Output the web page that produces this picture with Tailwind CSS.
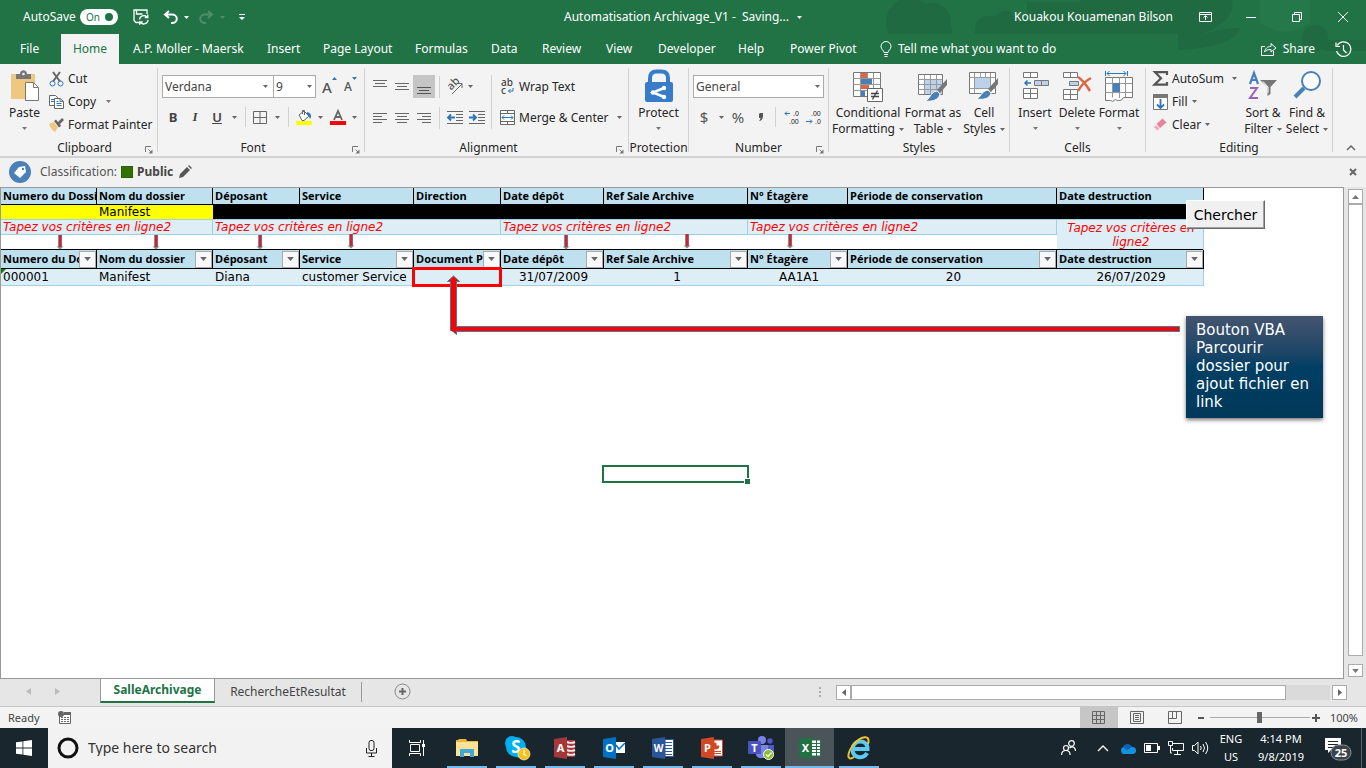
<!DOCTYPE html>
<html lang="en">
<head>
    <meta charset="UTF-8">
    <meta name="viewport" content="width=device-width, initial-scale=1.0">
    <title>Automatisation Archivage_V1</title>
    <script src="https://cdn.jsdelivr.net/npm/@tailwindcss/browser@4"></script>
</head>
<body class="flex h-screen flex-col overflow-hidden bg-[#f3f3f3] font-['Noto_Sans',sans-serif] text-[12px] leading-4 text-[#262626] select-none">

    <!-- shared glyphs -->
    <svg class="hidden">
        <symbol id="caret" viewBox="0 0 5 3"><path d="M0 0h5L2.500 3z" fill="currentColor"/></symbol>
        <symbol id="launcher" viewBox="0 0 8 8"><path d="M.5 6V.5H6M3.500 3.500l3 3" fill="none" stroke="#777"/><path d="M7.500 3.500v4h-4z" fill="#777"/></symbol>
        <symbol id="redarrow" viewBox="0 0 8 15"><path d="M2 0v11.500H.5L4 14.500l3.500-3H6V0z" fill="#7394a5"/><path d="M3 0h2.500v12H3z" fill="#d9202a"/></symbol>
    </svg>

    <header class="relative shrink-0 bg-[#217346] text-white">
        <svg class="absolute top-0 right-0" width="506" height="64" viewBox="0 0 506 64">
            <g fill="#1f6a41">
                <circle cx="50" cy="22" r="24"/><circle cx="72" cy="22" r="19"/><path d="M28 28h64v6H28z"/>
                <path d="M115 34c-2-14 8-20 20-18 6-6 14-8 20 0h12V2h62v32zM220 0h152c4 14-12 28-30 34H225z"/>
                <circle cx="455" cy="38" r="13"/><path d="M450 40h56v12h-40z"/>
            </g>
            <path d="M28 34h289v17h189v13H0V34z" fill="#217346"/>
            <path d="M318 34h24c12-2 22-6 38-6-4 14-28 20-62 22z" fill="#1f6a41"/>
            <path d="M400 0h50v22c-16 14-34 12-50 0z" fill="#257849"/>
        </svg>

        <div class="relative grid h-[34px] grid-cols-[1fr_auto_1fr] items-center">
            <div class="flex items-center pl-[23px]">
                <span>AutoSave</span>
                <button type="button" aria-label="AutoSave on" class="ml-1 flex h-4 w-[38px] items-center justify-between rounded-full bg-white px-1 pl-1.5 text-[10px] text-[#217346]">
                    <span>On</span><span class="mr-px size-2 rounded-full bg-[#217346]"></span>
                </button>
                <button type="button" aria-label="Save" class="ml-[15px]">
                    <svg width="16" height="16" viewBox="0 0 16 16" fill="none" stroke="#fff" stroke-width="1.300"><path d="M6 13.500H3l-2-2V1h13v4M3.500 1v4h6"/><path d="M6.500 10.500a4.300 4.300 0 0 1 7.500-2.500M14.800 5.500V8.500h-3M15 11a4.300 4.300 0 0 1-7.500 2.500M6.700 15.800V13h3"/></svg>
                </button>
                <button type="button" aria-label="Undo" class="ml-3.5 flex items-center gap-1.5">
                    <svg width="15" height="15" viewBox="0 0 15 15" fill="none" stroke="#fff" stroke-width="2"><path d="M6 1L2 4.500 6 8M2 4.500h7a4.500 4 0 0 1 0 8.500H8"/></svg>
                    <svg width="5" height="3"><use href="#caret"/></svg>
                </button>
                <button type="button" aria-label="Redo" class="ml-2.5 flex items-center gap-1.5 text-[#4f8f6c]">
                    <svg width="15" height="15" viewBox="0 0 15 15" fill="none" stroke="currentColor" stroke-width="2"><path d="M9 1l4 3.500L9 8M13 4.500H6A4.500 4 0 0 0 6 13h1"/></svg>
                    <svg width="5" height="3"><use href="#caret"/></svg>
                </button>
                <button type="button" aria-label="Customize Quick Access Toolbar" class="ml-3.5"><svg width="6" height="6" viewBox="0 0 6 6"><path d="M0 0h6v1H0zM0 3h6L3 6z" fill="#fff"/></svg></button>
            </div>
            <h1 class="flex items-center gap-2">Automatisation Archivage_V1 - &nbsp;Saving... <svg width="5" height="3"><use href="#caret"/></svg></h1>
            <div class="flex items-center justify-end pr-[18px]">
                <span class="mr-[26px]">Kouakou Kouamenan Bilson</span>
                <button type="button" aria-label="Ribbon display options" class="mr-[34px]"><svg width="13" height="10" viewBox="0 0 13 10" fill="none" stroke="#fff"><path d="M.5.500h12v9H.500zM.500 2.500h12M6.500 8V4M4.500 5.500l2-2 2 2"/></svg></button>
                <button type="button" aria-label="Minimize" class="mr-9"><svg width="10" height="10"><path d="M0 5.500h10" stroke="#fff"/></svg></button>
                <button type="button" aria-label="Restore" class="mr-9"><svg width="10" height="10" viewBox="0 0 10 10" fill="none" stroke="#fff"><path d="M.5 2.500h7v7h-7zM2.500 2.500v-2h7v7h-2"/></svg></button>
                <button type="button" aria-label="Close"><svg width="10" height="10"><path d="M0 0l10 10M10 0L0 10" stroke="#fff"/></svg></button>
            </div>
        </div>

        <nav class="relative flex h-[30px] items-center">
            <a href="#" class="w-[61px] pl-5">File</a>
            <a href="#" class="flex h-full w-[58px] items-center justify-center bg-[#f3f3f3] text-[#217346]">Home</a>
            <a href="#" class="w-[134px] pl-3.5">A.P. Moller - Maersk</a>
            <a href="#" class="w-[56px] pl-3.5">Insert</a>
            <a href="#" class="w-[92px] pl-3.5">Page Layout</a>
            <a href="#" class="w-[76px] pl-3.5">Formulas</a>
            <a href="#" class="w-[51px] pl-3.5">Data</a>
            <a href="#" class="w-[64px] pl-3.5">Review</a>
            <a href="#" class="w-[52px] pl-3.5">View</a>
            <a href="#" class="w-[80px] pl-3.5">Developer</a>
            <a href="#" class="w-[52px] pl-3.5">Help</a>
            <a href="#" class="w-[104px] pl-3.5">Power Pivot</a>
            <a href="#" class="flex items-center gap-1.5">
                <svg width="12" height="16" viewBox="0 0 12 16" fill="none" stroke="#fff"><path d="M4 11.500c0-2-3-3-3-6a5 5 0 0 1 10 0c0 3-3 4-3 6zM4 13.500h4M4.500 15.500h3"/></svg>
                Tell me what you want to do
            </a>
            <a href="#" class="ml-auto flex items-center gap-1.5">
                <svg width="16" height="14" viewBox="0 0 16 14" fill="none" stroke="#fff"><path d="M4 4.500H.500v9h12V9M3.500 10c1-4 3-5.500 6.500-5.500V1.500L15 6l-5 4V7.500c-3 0-5 .500-6.500 2.500z"/></svg>
                Share
            </a>
            <button type="button" aria-label="Version history" class="mr-3.5 ml-5"><svg width="17" height="17" viewBox="0 0 17 17" fill="none" stroke="#fff" stroke-width="1.200"><path d="M2.200 4.500A7.300 7.300 0 1 1 1.500 10M1 1.500v4h4M8.500 4v5l3 3"/></svg></button>
        </nav>
    </header>

    <!-- ribbon -->
    <section class="flex h-[94px] shrink-0 items-start border-b-2 border-[#d2d2d2] bg-[#f3f3f3] pt-1 whitespace-nowrap text-[#262626] [&_svg]:overflow-visible">
        <div class="flex h-[84px] w-[158px] flex-col border-r border-[#d2d2d2]">
            <div class="flex h-[70px]">
                <button type="button" class="flex w-[49px] flex-col items-center pt-0.5">
                    <svg class="mb-[3px]" width="30" height="32" viewBox="0 0 30 32"><path d="M1 4h24v25H1z" fill="#eec87f"/><path d="M6 9V4h4c0-5 7-5 7 0h4v5z" fill="#777"/><circle cx="13.500" cy="4" r="1.300" fill="#f3f3f3"/><path d="M15.500 12.500h8l5 5v13h-13z" fill="#fff" stroke="#777"/><path d="M23.500 12.500v5h5" fill="none" stroke="#777"/></svg>
                    Paste
                    <svg class="mt-1.5" width="5" height="3" color="#777"><use href="#caret"/></svg>
                </button>
                <div class="-mt-px flex flex-col">
                    <button type="button" class="flex h-[23px] items-center gap-1"><svg width="15" height="16" viewBox="0 0 15 16" fill="none"><path d="M4 1l7 9.500M11 1L4 10.500" stroke="#666" stroke-width="2"/><circle cx="3.500" cy="12.500" r="2.500" stroke="#2e75b6"/><circle cx="11.500" cy="12.500" r="2.500" stroke="#2e75b6"/></svg>Cut</button>
                    <button type="button" class="flex h-[23px] items-center gap-1"><svg width="15" height="14" viewBox="0 0 15 14" fill="#fff" stroke="#666"><path d="M.5.500h6l3 3v7h-9z"/><path d="M5.500 3.500h6l3 3v7h-9z"/><path d="M11 3.500v3h3.500" fill="none"/><path d="M2 4.500h3M2 6.500h3M7.500 8.500h5M7.500 10.500h5M7.500 6.500h2" stroke="#2e75b6"/></svg>Copy<svg class="ml-1.5" width="5" height="3" color="#777"><use href="#caret"/></svg></button>
                    <button type="button" class="flex h-[23px] items-center gap-1"><svg width="15" height="14" viewBox="0 0 15 14"><path d="M0 6l4.500-2 4.500 5-3 5c-2-1-4-3-6-8z" fill="#eec87f"/><path d="M5 3l2-1.500L9 4l4-4 2 2-4 4 1 2-2 1.500z" fill="#666"/></svg>Format Painter</button>
                </div>
            </div>
            <div class="grid h-3.5 grid-cols-[1fr_auto_1fr] leading-5"><span></span><span class="mr-0.5 ml-3.5">Clipboard</span><button type="button" aria-label="Clipboard settings" class="mt-1 mr-1 justify-self-end"><svg width="8" height="8"><use href="#launcher"/></svg></button></div>
        </div>

        <div class="flex h-[84px] w-[207px] flex-col border-r border-[#d2d2d2]">
            <div class="flex h-[70px] flex-col gap-2 pt-[7px] pl-1">
                <div class="flex h-[23px] items-center">
                    <div class="relative"><select aria-label="Font" class="h-[23px] w-[112px] appearance-none border border-[#ababab] bg-white px-0.5 text-[#444]"><option>Verdana</option></select><svg class="pointer-events-none absolute top-2.5 right-1.5" width="5" height="3" color="#666"><use href="#caret"/></svg></div>
                    <div class="relative -ml-px"><select aria-label="Font size" class="h-[23px] w-[43px] appearance-none border border-[#ababab] bg-white px-0.5 text-[#444]"><option>9</option></select><svg class="pointer-events-none absolute top-2.5 right-1" width="5" height="3" color="#666"><use href="#caret"/></svg></div>
                    <button type="button" aria-label="Increase font size" class="ml-1.5 flex w-[22px] items-start text-[15px] leading-5 font-medium text-[#555]">A<svg width="5" height="3" viewBox="0 0 5 3"><path d="M0 3h5L2.500 0z" fill="#2e75b6"/></svg></button>
                    <button type="button" aria-label="Decrease font size" class="flex items-start text-[12px] leading-5 font-medium text-[#555]">A<svg width="5" height="3" color="#2e75b6"><use href="#caret"/></svg></button>
                </div>
                <div class="flex h-[22px] items-center text-[13px] text-[#444]">
                    <button type="button" class="w-[22px] font-bold">B</button>
                    <button type="button" class="w-[22px] font-['Liberation_Serif',serif] font-bold italic">I</button>
                    <button type="button" class="w-[22px] font-semibold underline">U</button>
                    <button type="button" aria-label="Underline style" class="w-3"><svg class="mx-auto" width="5" height="3" color="#666"><use href="#caret"/></svg></button>
                    <span class="mx-[5px] h-5 w-px bg-[#d2d2d2]"></span>
                    <button type="button" aria-label="Borders" class="flex items-center gap-2 pl-0.5"><svg width="14" height="13" viewBox="0 0 14 13"><path d="M.5.500h13v12H.500zM7 0v13M0 6.500h14" fill="none" stroke="#666"/></svg><svg width="5" height="3" color="#666"><use href="#caret"/></svg></button>
                    <span class="mr-[7px] ml-2 h-5 w-px bg-[#d2d2d2]"></span>
                    <button type="button" aria-label="Fill color" class="flex items-center gap-1.5"><svg width="16" height="16" viewBox="0 0 16 16"><path d="M3 6l5-4 5 5-5 4.500H6z" fill="#fff" stroke="#666"/><path d="M6.500 5V1.500h2V6" fill="none" stroke="#666"/><path d="M11 3c4 1 5 4 3 7-1-2-1-4-3-4z" fill="#2e75b6"/><path d="M0 12h16v4H0z" fill="#ff0"/></svg><svg width="5" height="3" color="#666"><use href="#caret"/></svg></button>
                    <button type="button" aria-label="Font color" class="ml-[7px] flex items-center gap-1.5"><svg width="16" height="16" viewBox="0 0 16 16"><path d="M4 11L8 2l4 9M5.500 8h5" fill="none" stroke="#666" stroke-width="1.800"/><path d="M0 12h16v4H0z" fill="red"/></svg><svg width="5" height="3" color="#666"><use href="#caret"/></svg></button>
                </div>
            </div>
            <div class="grid h-3.5 grid-cols-[1fr_auto_1fr] leading-5"><span></span><span class="mr-4">Font</span><button type="button" aria-label="Font settings" class="mt-1 mr-1 justify-self-end"><svg width="8" height="8"><use href="#launcher"/></svg></button></div>
        </div>

        <div class="flex h-[84px] w-[264px] flex-col border-r border-[#d2d2d2]">
            <div class="flex h-[70px] pt-[7px]">
                <div class="flex flex-col gap-2 pl-1">
                    <div class="flex h-[23px] items-center">
                        <button type="button" aria-label="Top align" class="flex h-full w-[22px] items-center justify-center"><svg class="mb-1" width="14" height="9"><path d="M0 .5h14M2 3.500h10M0 6.500h14" stroke="#666"/></svg></button>
                        <button type="button" aria-label="Middle align" class="flex h-full w-[22px] items-center justify-center"><svg width="14" height="7"><path d="M0 .5h14M2 3.500h10M0 6.500h14" stroke="#666"/></svg></button>
                        <button type="button" aria-label="Bottom align" class="flex h-full w-[22px] items-end justify-center bg-[#c5c5c5] pb-[3px]"><svg width="14" height="8"><path d="M0 .5h14M2 3.500h10M0 6.500h14" stroke="#555"/></svg></button>
                        <span class="mx-1 h-[22px] w-px bg-[#d2d2d2]"></span>
                        <button type="button" aria-label="Orientation" class="flex items-center gap-1 pl-[3px]"><svg width="17" height="17" viewBox="0 0 17 17"><text x="0" y="11" transform="rotate(-45 4 7)" font-size="11" font-weight="500" fill="#555">ab</text><path d="M5 16L15 6M15 10V5.500h-4.500" fill="none" stroke="#666"/></svg><svg width="5" height="3" color="#666"><use href="#caret"/></svg></button>
                    </div>
                    <div class="flex h-[23px] items-center">
                        <button type="button" aria-label="Align left" class="flex w-[22px] justify-center"><svg width="14" height="10"><path d="M0 .5h14M0 3.500h9M0 6.500h14M0 9.500h9" stroke="#666"/></svg></button>
                        <button type="button" aria-label="Center" class="flex w-[22px] justify-center"><svg width="14" height="10"><path d="M0 .5h14M2 3.500h10M0 6.500h14M2 9.500h10" stroke="#666"/></svg></button>
                        <button type="button" aria-label="Align right" class="flex w-[22px] justify-center"><svg width="14" height="10"><path d="M0 .5h14M5 3.500h9M0 6.500h14M5 9.500h9" stroke="#666"/></svg></button>
                        <span class="mx-1 h-[22px] w-px bg-[#d2d2d2]"></span>
                        <button type="button" aria-label="Decrease indent" class="pl-[3px]"><svg width="16" height="13" viewBox="0 0 16 13"><path d="M0 .5h16M9 3.500h7M9 6.500h7M9 9.500h7M0 12.500h16" stroke="#666"/><path d="M8 6.500H1M4 3.500l-3 3 3 3" stroke="#2e75b6" stroke-width="1.800" fill="none"/></svg></button>
                        <button type="button" aria-label="Increase indent" class="pl-1.5"><svg width="16" height="13" viewBox="0 0 16 13"><path d="M0 .5h16M9 3.500h7M9 6.500h7M9 9.500h7M0 12.500h16" stroke="#666"/><path d="M0 6.500h7M4 3.500l3 3-3 3" stroke="#2e75b6" stroke-width="1.800" fill="none"/></svg></button>
                    </div>
                </div>
                <span class="ml-1.5 h-[54px] w-px bg-[#d2d2d2]"></span>
                <div class="flex flex-col gap-2 pl-2">
                    <button type="button" class="flex h-[23px] items-center gap-1"><svg width="15" height="16" viewBox="0 0 15 16" font-size="10" font-weight="500" fill="#444"><text x="1" y="7">ab</text><text x="1" y="15">c</text><path d="M13 9v3H8.500M10.500 10l-2 2 2 2" fill="none" stroke="#2e75b6"/></svg>Wrap Text</button>
                    <button type="button" class="flex h-[23px] items-center gap-1"><svg width="15" height="15" viewBox="0 0 15 15" fill="#fff" stroke="#666"><path d="M.5.500h14v14H.500zM.500 3.500h14M.500 11.500h14M7.500.500v3M7.500 11.500v3"/><path d="M2 7.500h11M4 5.500l-2 2 2 2M11 5.500l2 2-2 2" stroke="#2e75b6" fill="none"/></svg>Merge &amp; Center<svg class="ml-1" width="5" height="3" color="#666"><use href="#caret"/></svg></button>
                </div>
            </div>
            <div class="grid h-3.5 grid-cols-[1fr_auto_1fr] leading-5"><span></span><span class="mr-4">Alignment</span><button type="button" aria-label="Alignment settings" class="mt-1 mr-1 justify-self-end"><svg width="8" height="8"><use href="#launcher"/></svg></button></div>
        </div>

        <div class="flex h-[84px] w-[60px] flex-col items-center border-r border-[#d2d2d2]">
            <button type="button" class="flex h-[70px] flex-col items-center pt-0.5">
                <svg class="mb-[3px]" width="28" height="32" viewBox="0 0 28 32"><path d="M5 14V8q0-6.500 6.500-6.500h5Q23 1.500 23 8v6" fill="none" stroke="#377cc8" stroke-width="4"/><rect y="12" width="28" height="20" rx="2" fill="#377cc8"/><path d="M19 18L8 22.500 19 27" fill="none" stroke="#fff" stroke-width="2.500"/><circle cx="19" cy="18" r="2.200" fill="#fff"/><circle cx="19" cy="27" r="2.200" fill="#fff"/><circle cx="8" cy="22.500" r="2.200" fill="#fff"/></svg>
                Protect
                <svg class="mt-1.5" width="5" height="3" color="#777"><use href="#caret"/></svg>
            </button>
            <div class="h-3.5 leading-5">Protection</div>
        </div>

        <div class="flex h-[84px] w-[140px] flex-col border-r border-[#d2d2d2]">
            <div class="flex h-[70px] flex-col gap-2 px-1 pt-[7px]">
                <div class="relative"><select aria-label="Number format" class="block h-[23px] w-full appearance-none border border-[#ababab] bg-white px-0.5 text-[#444]"><option>General</option></select><svg class="pointer-events-none absolute top-2.5 right-1" width="5" height="3" color="#666"><use href="#caret"/></svg></div>
                <div class="flex h-[22px] items-center text-[15px] text-[#555]">
                    <button type="button" class="w-[22px]">$</button>
                    <button type="button" aria-label="Accounting formats" class="w-3"><svg class="mx-auto" width="5" height="3" color="#666"><use href="#caret"/></svg></button>
                    <button type="button" class="w-[22px]">%</button>
                    <button type="button" aria-label="Comma style" class="flex w-[22px] justify-center"><svg width="5" height="8" viewBox="0 0 5 8"><path d="M2 0h3v3c0 3-2 5-4 5 1-1 1.500-2 1.500-3H1V1z" fill="#555"/></svg></button>
                    <span class="mx-1 h-5 w-px bg-[#d2d2d2]"></span>
                    <button type="button" aria-label="Increase decimal" class="w-[22px] font-['Liberation_Sans',sans-serif]"><svg class="mx-auto" width="15" height="15" viewBox="0 0 15 15" font-size="7" fill="#222"><text x="9" y="6">.0</text><text x="5" y="14">.00</text><path d="M6 3.500H1M3 1.500l-2 2 2 2" fill="none" stroke="#2e75b6"/></svg></button>
                    <button type="button" aria-label="Decrease decimal" class="w-[22px] font-['Liberation_Sans',sans-serif]"><svg class="mx-auto" width="15" height="15" viewBox="0 0 15 15" font-size="7" fill="#222"><text x="5" y="6">.00</text><text x="9" y="14">.0</text><path d="M0 11.500h6M4 9.500l2 2-2 2" fill="none" stroke="#2e75b6"/></svg></button>
                </div>
            </div>
            <div class="grid h-3.5 grid-cols-[1fr_auto_1fr] leading-5"><span></span><span>Number</span><button type="button" aria-label="Number settings" class="mt-1 mr-1 justify-self-end"><svg width="8" height="8"><use href="#launcher"/></svg></button></div>
        </div>

        <div class="flex h-[84px] w-[181px] flex-col border-r border-[#d2d2d2]">
            <div class="flex h-[70px]">
                <button type="button" class="flex w-[78px] flex-col items-center pt-0.5">
                    <svg class="mb-[3px]" width="30" height="32" viewBox="0 0 30 32"><path d="M.5 2.500h27v24H.500z" fill="#fff" stroke="#777"/><path d="M8 3h6v5H8zM8 14h8v5H8z" fill="#dd6645"/><path d="M8 8h11v6H8zM8 20h4v6H8z" fill="#4a80b8"/><path d="M.5 8.500h27M.500 14.500h27M.500 20.500h27M7.500 3v23M14.500 3v5M20.500 3v23" stroke="#999"/><path d="M14.500 18.500h15v13h-15z" fill="#fff" stroke="#666"/><path d="M18 23.500h8M18 26.500h8M24.500 20.500l-5 9" stroke="#444" stroke-width="1.300"/></svg>
                    Conditional<span class="flex items-center gap-1">Formatting<svg width="5" height="3" color="#666"><use href="#caret"/></svg></span>
                </button>
                <button type="button" class="flex w-[52px] flex-col items-center pt-0.5">
                    <svg class="mb-[3px]" width="30" height="32" viewBox="0 0 30 32"><path d="M.5 4.500h24v20H.500z" fill="#fff" stroke="#777"/><path d="M7 10h17v14H7z" fill="#bcd2ea"/><path d="M.5 9.500h24M.500 14.500h24M.500 19.500h24M6.500 5v19M12.500 5v19M18.500 5v19" stroke="#999"/><path d="M29 9v6l-7 8-3-3z" fill="#777"/><path d="M19 21l3 3c-1 6-8 8-15 7 5-1 5-9 12-10z" fill="#4a80b8" stroke="#fff"/></svg>
                    Format as<span class="flex items-center gap-1">Table<svg width="5" height="3" color="#666"><use href="#caret"/></svg></span>
                </button>
                <button type="button" class="flex w-[50px] flex-col items-center pt-0.5">
                    <svg class="mb-[3px]" width="30" height="32" viewBox="0 0 30 32"><path d="M.5 2.500h26v21H.500z" fill="#fff" stroke="#777"/><path d="M6 8h15v11H6z" fill="#bcd2ea"/><path d="M.5 7.500h26M.500 18.500h26M5.500 3v20M21.500 3v20M11.500 3v4M16.500 3v4" stroke="#999"/><path d="M29 8v6l-7 8-3-3z" fill="#777"/><path d="M19 20l3 3c-1 6-8 7-15 6 5-1 5-8 12-9z" fill="#4a80b8" stroke="#fff"/></svg>
                    Cell<span class="flex items-center gap-1">Styles<svg width="5" height="3" color="#666"><use href="#caret"/></svg></span>
                </button>
            </div>
            <div class="h-3.5 text-center leading-5">Styles</div>
        </div>

        <div class="flex h-[84px] w-[136px] flex-col border-r border-[#d2d2d2]">
            <div class="flex h-[70px] pl-1">
                <button type="button" class="flex w-[42px] flex-col items-center pt-0.5">
                    <svg class="mb-[3px]" width="27" height="32" viewBox="0 0 27 32" fill="#fff" stroke="#777"><path d="M1.500 2.500h14v5h-14zM8.500 2.500v5M1.500 18.500h14v10h-14zM8.500 18.500v10M1.500 23.500h14"/><path d="M12.500 10.500h14v5h-14zM19.500 10.500v5" fill="#bcd2ea"/><path d="M9 13H3M5.500 10.500L3 13l2.500 2.500" fill="none" stroke="#2e75b6" stroke-width="1.500"/></svg>
                    Insert<svg class="mt-1.5" width="5" height="3" color="#777"><use href="#caret"/></svg>
                </button>
                <button type="button" class="flex w-[42px] flex-col items-center pt-0.5">
                    <svg class="mb-[3px]" width="30" height="32" viewBox="0 0 30 32" fill="#fff" stroke="#777"><path d="M1.500 2.500h14v5h-14zM8.500 2.500v5M1.500 19.500h14v10h-14zM8.500 19.500v10M1.500 24.500h14"/><path d="M7.500 11.500h9v4h-9z" fill="#bcd2ea"/><path d="M16 7q6 4 12 14M29 8Q21 12 16 21" fill="none" stroke="#dd6645" stroke-width="2.500"/></svg>
                    Delete<svg class="mt-1.5" width="5" height="3" color="#777"><use href="#caret"/></svg>
                </button>
                <button type="button" class="flex w-[42px] flex-col items-center pt-0.5">
                    <svg class="mb-[3px]" width="28" height="32" viewBox="0 0 28 32" fill="#fff" stroke="#777"><path d="M.5 7.500h27v20h-9q-2 4-5 3-2 0-3-1-3 3-5 1h-5z"/><path d="M0 13.500h27M0 22.500h27M7.500 7.500v20M14.500 7.500v6M14.500 22v6M20.500 7.500v20" stroke="#999"/><path d="M8 13h7v9H8z" fill="#4a80b8" stroke="none"/><path d="M.5 1v5M22.500 1v5M2 3.500h19M4.500 1L2 3.500 4.500 6M18.500 1L21 3.500 18.500 6" fill="none" stroke="#2e75b6"/></svg>
                    Format<svg class="mt-1.5" width="5" height="3" color="#777"><use href="#caret"/></svg>
                </button>
            </div>
            <div class="h-3.5 text-center leading-5">Cells</div>
        </div>

        <div class="flex h-[84px] w-[187px] flex-col border-r border-[#d2d2d2]">
            <div class="flex h-[70px]">
                <div class="-mt-px flex w-[95px] flex-col pr-1 pl-[7px]">
                    <button type="button" class="flex h-[23px] items-center gap-1"><svg width="15" height="15" viewBox="0 0 15 15"><path d="M14 4V1.200H2l6 6-6.500 6.500H14V11" fill="none" stroke="#555" stroke-width="2.200"/></svg>AutoSum<svg class="ml-auto" width="5" height="3" color="#666"><use href="#caret"/></svg></button>
                    <button type="button" class="flex h-[23px] items-center gap-1"><svg width="15" height="16" viewBox="0 0 15 16"><path d="M.5.500h14v15H.500z" fill="#fff" stroke="#777"/><path d="M0 0h15v4H0z" fill="#777"/><path d="M7.500 5v9M4 10.500l3.500 3.500 3.500-3.500" fill="none" stroke="#2e75b6" stroke-width="1.800"/></svg>Fill<svg width="5" height="3" color="#666"><use href="#caret"/></svg></button>
                    <button type="button" class="flex h-[23px] items-center gap-1"><svg width="15" height="14" viewBox="0 0 15 14"><path d="M3.500 6l6-5.500 4 4L7 10z" fill="#e9839a"/><path d="M2.700 7l3.500 3.800L4.500 12.500 1 9z" fill="#f0a5b5"/></svg>Clear<svg width="5" height="3" color="#666"><use href="#caret"/></svg></button>
                </div>
                <button type="button" class="flex w-[44px] flex-col items-center pt-0.5">
                    <svg class="mb-[3px]" width="30" height="32" viewBox="0 0 30 32" fill="none"><path d="M2 14L6 3l4 11M3.500 10h5" stroke="#4a80b8" stroke-width="2.200"/><path d="M2 18h7L2 28h8" stroke="#9b62b8" stroke-width="2"/><path d="M12 10h17l-6.500 7v7l-3 2v-9z" fill="#777"/><path d="M15 11.500l5 5.500v6" stroke="#fff"/></svg>
                    Sort &amp;<span class="flex items-center gap-1">Filter<svg width="5" height="3" color="#666"><use href="#caret"/></svg></span>
                </button>
                <button type="button" class="flex w-[44px] flex-col items-center pt-0.5">
                    <svg class="mb-[3px]" width="28" height="32" viewBox="0 0 28 32"><circle cx="18" cy="11" r="9" fill="#fff" stroke="#4a80b8" stroke-width="2"/><path d="M11 18l-9 9" stroke="#4a80b8" stroke-width="4"/></svg>
                    Find &amp;<span class="flex items-center gap-1">Select<svg width="5" height="3" color="#666"><use href="#caret"/></svg></span>
                </button>
            </div>
            <div class="h-3.5 text-center leading-5">Editing</div>
        </div>
        <button type="button" aria-label="Collapse the ribbon" class="mt-[76px] mr-2.5 ml-auto"><svg width="10" height="7"><path d="M1 6l4-4 4 4" fill="none" stroke="#666" stroke-width="1.500"/></svg></button>
    </section>

    <section class="flex h-[29px] shrink-0 items-center bg-[#f1f1f1] pr-2 pb-0.5 pl-[9px] text-[#555]">
        <svg width="22" height="22" viewBox="0 0 22 22"><circle cx="11" cy="11" r="11" fill="#4a80b8"/><path d="M10 6l6-1 1 6-6 6-6-5z" fill="#fff"/><circle cx="14" cy="8" r="1.200" fill="#4a80b8"/></svg>
        <span class="ml-[9px]">Classification:</span>
        <span class="ml-1 size-3 border border-[#276400] bg-[#317100]"></span>
        <span class="ml-1 font-bold text-[#444]">Public</span>
        <button type="button" aria-label="Edit classification" class="ml-1.5"><svg width="13" height="13" viewBox="0 0 13 13"><path d="M0 13l1-4 7-7 3 3-7 7zM9 1l1-1 3 3-1 1z" fill="#555"/></svg></button>
        <button type="button" aria-label="Close classification bar" class="mr-px ml-auto"><svg width="8" height="8"><path d="M1 1l6 6M7 1L1 7" stroke="#666" stroke-width="2"/></svg></button>
    </section>

    <!-- worksheet -->
    <main class="flex min-h-0 flex-1 bg-[#e6e6e6]">
        <div class="relative min-w-0 flex-1 overflow-hidden border border-[#999] bg-white font-['DejaVu_Sans',sans-serif] text-[12px] text-black">
            <table class="w-[1203px] table-fixed border-separate border-spacing-0 text-left leading-[14px] whitespace-nowrap">
                <colgroup>
                    <col class="w-[96px]"><col class="w-[116px]"><col class="w-[87px]"><col class="w-[114px]"><col class="w-[87px]"><col class="w-[103px]"><col class="w-[144px]"><col class="w-[100px]"><col class="w-[209px]"><col class="w-[147px]">
                </colgroup>
                <tbody>
                    <tr class="h-[17px] bg-[#bfe1ef] font-['Open_Sans',sans-serif] text-[11px] [&>th]:overflow-hidden [&>th]:border-r [&>th]:border-b [&>th]:border-black [&>th]:p-0 [&>th]:pl-0.5">
                        <th>Numero du Dossier</th><th>Nom du dossier</th><th>Déposant</th><th>Service</th><th>Direction</th><th>Date dépôt</th><th>Ref Sale Archive</th><th>N° Étagère</th><th>Période de conservation</th><th>Date destruction</th>
                    </tr>
                    <tr class="h-[15px] [&>td]:border-b [&>td]:border-[#9fd0e4] [&>td]:py-0">
                        <td class="bg-[#ffff00]"></td><td class="bg-[#ffff00] pr-0 pl-0.5">Manifest</td><td colspan="8" class="bg-black"></td>
                    </tr>
                    <tr class="h-[15px] bg-[#deeef7] text-[#ff0000] italic [&>td]:border-r [&>td]:border-[#9fd0e4] [&>td]:p-0 [&>td]:pl-0.5">
                        <td colspan="2" class="border-b">Tapez vos critères en ligne2</td>
                        <td colspan="3" class="border-b">Tapez vos critères en ligne2</td>
                        <td colspan="2" class="border-b">Tapez vos critères en ligne2</td>
                        <td colspan="2" class="border-b">Tapez vos critères en ligne2</td>
                        <td rowspan="2" class="text-center whitespace-normal shadow-[inset_0_-1px_#000]">Tapez vos critères en ligne2</td>
                    </tr>
                    <tr class="h-[15px]"><td colspan="9" class="border-b border-black p-0"></td></tr>
                    <tr class="h-[19px] bg-[#bfe1ef] font-['Open_Sans',sans-serif] text-[11px] [&>th]:border-r [&>th]:border-b [&>th]:border-black [&>th]:p-0 [&_button]:flex [&_button]:size-[17px] [&_button]:shrink-0 [&_button]:items-center [&_button]:justify-center [&_button]:border [&_button]:border-[#ababab] [&_button]:bg-[#f8f8fa] [&_button]:text-[#666] [&_div]:flex [&_div]:items-center [&_span]:flex-1 [&_span]:overflow-hidden [&_span]:pl-0.5">
                        <th><div><span>Numero du Dossier</span><button type="button" aria-label="Filter"><svg width="7" height="4"><use href="#caret"/></svg></button></div></th>
                        <th><div><span>Nom du dossier</span><button type="button" aria-label="Filter"><svg width="7" height="4"><use href="#caret"/></svg></button></div></th>
                        <th><div><span>Déposant</span><button type="button" aria-label="Filter"><svg width="7" height="4"><use href="#caret"/></svg></button></div></th>
                        <th><div><span>Service</span><button type="button" aria-label="Filter"><svg width="7" height="4"><use href="#caret"/></svg></button></div></th>
                        <th><div><span>Document PDF</span><button type="button" aria-label="Filter"><svg width="7" height="4"><use href="#caret"/></svg></button></div></th>
                        <th><div><span>Date dépôt</span><button type="button" aria-label="Filter"><svg width="7" height="4"><use href="#caret"/></svg></button></div></th>
                        <th><div><span>Ref Sale Archive</span><button type="button" aria-label="Filter"><svg width="7" height="4"><use href="#caret"/></svg></button></div></th>
                        <th><div><span>N° Étagère</span><button type="button" aria-label="Filter"><svg width="7" height="4"><use href="#caret"/></svg></button></div></th>
                        <th><div><span>Période de conservation</span><button type="button" aria-label="Filter"><svg width="7" height="4"><use href="#caret"/></svg></button></div></th>
                        <th><div><span>Date destruction</span><button type="button" aria-label="Filter"><svg width="7" height="4"><use href="#caret"/></svg></button></div></th>
                    </tr>
                    <tr class="h-[17px] bg-[#deeef7] [&>td]:border-b [&>td]:border-[#9fd0e4] [&>td]:p-0 [&>td]:pl-0.5">
                        <td class="relative">000001<svg class="absolute top-0 left-0" width="5" height="5"><path d="M0 0h5L0 5z" fill="#107c10"/></svg></td>
                        <td>Manifest</td><td>Diana</td><td>customer Service</td><td></td>
                        <td class="text-center">31/07/2009</td><td class="text-center">1</td><td class="text-center">AA1A1</td><td class="text-center">20</td><td class="border-r text-center">26/07/2029</td>
                    </tr>
                </tbody>
            </table>

            <!-- shapes floating over the cells -->
            <svg class="absolute top-[47px] left-[55px]" width="8" height="15"><use href="#redarrow"/></svg>
            <svg class="absolute top-[47px] left-[151px]" width="8" height="15"><use href="#redarrow"/></svg>
            <svg class="absolute top-[47px] left-[255px]" width="8" height="15"><use href="#redarrow"/></svg>
            <svg class="absolute top-[46px] left-[346px]" width="8" height="15"><use href="#redarrow"/></svg>
            <svg class="absolute top-[47px] left-[561px]" width="8" height="15"><use href="#redarrow"/></svg>
            <svg class="absolute top-[46px] left-[682px]" width="8" height="15"><use href="#redarrow"/></svg>
            <svg class="absolute top-[46px] left-[785px]" width="8" height="15"><use href="#redarrow"/></svg>
            <div class="absolute top-[79px] left-[411px] h-5 w-[90px] border-3 border-[#ff0000]"></div>
            <svg class="absolute top-[87px] left-[445px]" width="735" height="62" viewBox="0 0 735 62">
                <path d="M10.500 51.500h723v5h-723v3l-6-5z" fill="red" stroke="#417f9c"/>
                <path d="M7.500 1l6 5.500h-3v49h-6v-49h-3z" fill="red" stroke="#417f9c"/>
                <path d="M5 52h8v4H5z" fill="red"/>
            </svg>
            <button type="button" class="absolute top-3 left-[1185px] h-[29px] w-[79px] border border-t-white border-r-[#696969] border-b-[#696969] border-l-white bg-[#f0f0f0] text-[14px] shadow-[inset_-1px_-1px_#a0a0a0]">Chercher</button>
            <div class="absolute top-32 left-[1185px] h-[102px] w-[137px] bg-linear-to-b from-[#44546f] via-[#003f64] via-50% to-[#003859] px-2.5 pt-[5px] text-[15px] leading-[18px] text-white shadow-[0_2px_4px_#0008]">Bouton VBA Parcourir dossier pour ajout fichier en link</div>
            <div class="absolute top-[277px] left-[601px] h-[18px] w-[147px] border-2 border-[#217346]"><span class="absolute -right-[3px] -bottom-[3px] size-[6px] border-t border-l border-white bg-[#217346]"></span></div>
        </div>
        <div class="ml-1 flex w-[18px] flex-col py-0.5 pr-[3px]">
            <button type="button" aria-label="Scroll up" class="flex h-[15px] items-center justify-center border border-[#ababab] bg-white"><svg width="7" height="4"><path d="M0 4h7L3.500 0z" fill="#777"/></svg></button>
            <div class="mb-2 flex-1 border border-[#ababab] bg-white"></div>
            <button type="button" aria-label="Scroll down" class="flex h-[13px] items-center justify-center border border-[#ababab] bg-white text-[#777]"><svg width="7" height="4"><use href="#caret"/></svg></button>
        </div>
    </main>

    <!-- sheet tabs -->
    <section class="flex h-[27px] shrink-0 items-start bg-[#e6e6e6] text-[#444]">
        <div class="flex h-[25px] w-[100px] items-center gap-6 pl-[26px] text-[#bbb]">
            <svg width="5" height="7"><path d="M5 0v7L0 3.500z" fill="currentColor"/></svg>
            <svg width="5" height="7"><path d="M0 0v7l5-3.500z" fill="currentColor"/></svg>
        </div>
        <a href="#" class="flex h-6 w-[115px] items-center justify-center border-x border-b-2 border-x-[#999] border-b-[#217346] bg-white font-bold text-[#217346]">SalleArchivage</a>
        <a href="#" class="mt-[3px] flex h-5 w-[147px] items-center justify-center border-r border-[#999]">RechercheEtResultat</a>
        <button type="button" aria-label="New sheet" class="mt-1 ml-8"><svg width="17" height="17" viewBox="0 0 17 17" fill="none" stroke="#888"><circle cx="8.500" cy="8.500" r="7.500"/><path d="M8.500 5v7M5 8.500h7" stroke="#666" stroke-width="2"/></svg></button>
        <svg class="mt-2 ml-auto" width="2" height="11"><path d="M0 0h2v2H0zM0 4h2v2H0zM0 8h2v2H0z" fill="#ababab"/></svg>
        <div class="mt-1.5 mr-[19px] ml-[15px] flex h-[15px] w-[511px]">
            <button type="button" aria-label="Scroll left" class="flex w-[15px] items-center justify-center border border-[#ababab] bg-white"><svg width="4" height="7"><path d="M4 0v7L0 3.500z" fill="#666"/></svg></button>
            <div class="flex-1 border border-[#ababab] bg-white"></div>
            <div class="mr-0.5 w-[44px] bg-[#dadada]"></div>
            <button type="button" aria-label="Scroll right" class="flex w-[15px] items-center justify-center border border-[#ababab] bg-white"><svg width="4" height="7"><path d="M0 0v7l4-3.500z" fill="#666"/></svg></button>
        </div>
    </section>

    <footer class="flex h-[22px] shrink-0 items-center border-t border-[#c6c6c6] bg-[#f3f3f3] text-[11px] text-[#444]">
        <span class="w-[58px] pl-2">Ready</span>
        <button type="button" aria-label="Record macro"><svg width="13" height="13" viewBox="0 0 13 13"><path d="M1.500 5v7.500h11v-11H6" fill="#fff" stroke="#666"/><path d="M6 1h7v3H6z" fill="#666"/><circle cx="3" cy="3" r="3" fill="#666"/><path d="M3 6.500h8M3 8.500h8M3 10.500h8" stroke="#666" stroke-dasharray="2 1"/></svg></button>
        <button type="button" aria-label="Normal view" class="ml-auto flex h-full w-[38px] items-center justify-center bg-[#c6c6c6]"><svg width="13" height="13"><path d="M.5.500h12v12H.500zM4.500 0v13M8.500 0v13M0 4.500h13M0 8.500h13" fill="none" stroke="#666"/></svg></button>
        <button type="button" aria-label="Page layout view" class="flex w-[38px] justify-center"><svg width="14" height="13"><path d="M.5.500h13v12H.500zM3.500 2.500h7v8h-7zM5 4.500h4M5 6.500h4M5 8.500h4" fill="none" stroke="#666"/></svg></button>
        <button type="button" aria-label="Page break preview" class="flex w-[38px] justify-center"><svg width="14" height="13"><path d="M.5.500h13v12H.500zM.500 7.500h8v-7M4.500 0v7" fill="none" stroke="#666"/></svg></button>
        <button type="button" aria-label="Zoom out" class="ml-1"><svg width="6" height="2"><path d="M0 0h6v2H0z" fill="#555"/></svg></button>
        <input type="range" aria-label="Zoom" min="0" max="100" value="50" class="mr-0.5 ml-1.5 h-[11px] w-[100px] appearance-none bg-transparent [&::-webkit-slider-runnable-track]:h-px [&::-webkit-slider-runnable-track]:bg-[#aaa] [&::-webkit-slider-thumb]:-mt-[5px] [&::-webkit-slider-thumb]:h-[11px] [&::-webkit-slider-thumb]:w-[5px] [&::-webkit-slider-thumb]:appearance-none [&::-webkit-slider-thumb]:bg-[#666]">
        <button type="button" aria-label="Zoom in"><svg width="8" height="8"><path d="M3 0h2v3h3v2H5v3H3V5H0V3h3z" fill="#555"/></svg></button>
        <span class="mr-2 ml-2.5">100%</span>
    </footer>

    <!-- taskbar -->
    <nav class="flex h-10 shrink-0 bg-[#1a262e] text-white">
        <button type="button" aria-label="Start" class="flex w-12 items-center justify-center"><svg width="16" height="16" viewBox="0 0 16 16" fill="#fff"><path d="M0 2.300L6.500 1.400v6.200H0zM7.300 1.300L16 0v7.600H7.300zM0 8.400h6.500v6.200L0 13.700zM7.300 8.400H16V16l-8.700-1.300z"/></svg></button>
        <label class="flex w-[344px] items-center bg-[#f2f2f2] pr-3.5 pl-[9px] text-[#333]">
            <svg width="22" height="22"><circle cx="11" cy="11" r="9" fill="none" stroke="#111" stroke-width="3"/></svg>
            <input type="text" aria-label="Search" placeholder="Type here to search" class="ml-[9px] min-w-0 flex-1 bg-transparent text-[14px] placeholder:text-[#333]">
            <svg width="13" height="17" viewBox="0 0 13 17" fill="none" stroke="#222"><rect x="4" y=".5" width="5" height="10" rx="2"/><path d="M1.500 8v5h10V8M6.500 13v3M3.500 16.500h6"/></svg>
        </label>
        <button type="button" aria-label="Task view" class="flex w-[50px] items-center justify-center"><svg width="17" height="16" viewBox="0 0 17 16" fill="none" stroke="#fff"><path d="M1.500 4.500h9v7h-9zM.500 0v2.500h11V0M.500 16v-2.500h11V16M14.500 0v16"/><path d="M13 4h3v3h-3z" fill="#fff" stroke="none"/></svg></button>
        <div class="flex [&_i]:absolute [&_i]:bottom-0 [&_i]:h-0.5 [&_i]:w-10 [&_i]:bg-[#76b9ed] [&>button]:relative [&>button]:flex [&>button]:w-[49px] [&>button]:items-center [&>button]:justify-center">
            <button type="button" aria-label="File Explorer"><svg width="22" height="20" viewBox="0 0 22 20"><path d="M0 2h2l1-1h7l1 2h11v15H0z" fill="#e8b73c"/><path d="M0 4h22v14H0z" fill="#fde393"/><path d="M4 19v-8h14v8h-4v-4H8v4z" fill="#3fa9de"/></svg><i></i></button>
            <button type="button" aria-label="Skype"><svg class="ml-1" width="26" height="26" viewBox="0 0 26 26"><circle cx="7" cy="8" r="7" fill="#00aff0"/><circle cx="15" cy="16" r="7" fill="#00aff0"/><circle cx="11" cy="12" r="10" fill="#00aff0"/><text x="11" y="18" font-size="17" font-weight="bold" fill="#fff" text-anchor="middle">S</text><circle cx="19" cy="19" r="6" fill="#fbc117" stroke="#fff" stroke-width=".6"/><path d="M19 15v4.500l2.500 1" stroke="#fff" fill="none" stroke-width="1.300"/></svg><i></i></button>
            <button type="button" aria-label="Access"><svg width="22" height="22" viewBox="0 0 22 22"><path d="M12 3h9v17h-9z" fill="#a4373a"/><path d="M13 5c2 1 6 1 8 0M13 9c2 1 6 1 8 0M13 13c2 1 6 1 8 0M13 17c2 1 6 1 8 0" stroke="#f5e6e6" stroke-width="2" fill="none"/><path d="M0 2l13-2v22L0 20z" fill="#a4373a"/><text x="6.500" y="15" font-size="11" font-weight="bold" fill="#fff" text-anchor="middle">A</text></svg><i></i></button>
            <button type="button" aria-label="Outlook"><svg width="22" height="22" viewBox="0 0 22 22"><path d="M13 5h9v11h-9z" fill="#fff"/><path d="M13 8l3 4 6-6" stroke="#0072c6" stroke-width="1.500" fill="none"/><path d="M0 2l13-2v22L0 20z" fill="#0072c6"/><text x="6.500" y="15" font-size="11" font-weight="bold" fill="#fff" text-anchor="middle">O</text></svg><i></i></button>
            <button type="button" aria-label="Word"><svg width="22" height="22" viewBox="0 0 22 22"><path d="M13 2.500h8.500v17H13z" fill="#fff" stroke="#2b579a"/><path d="M13 5.500h7M13 8.500h7M13 11.500h7M13 14.500h7M13 17.500h7" stroke="#2b579a"/><path d="M0 2l13-2v22L0 20z" fill="#2b579a"/><text x="6.500" y="15" font-size="10" font-weight="bold" fill="#fff" text-anchor="middle">W</text></svg><i></i></button>
            <button type="button" aria-label="PowerPoint"><svg width="22" height="22" viewBox="0 0 22 22"><path d="M13 3h8.500v16H13z" fill="#fff" stroke="#d24726"/><path d="M15 6a3 3 0 1 0 3 3h-3zM13 14.500h7M13 16.500h7" fill="#d24726" stroke="#d24726"/><path d="M0 2l13-2v22L0 20z" fill="#d24726"/><text x="6.500" y="15" font-size="11" font-weight="bold" fill="#fff" text-anchor="middle">P</text></svg><i></i></button>
            <button type="button" aria-label="Teams"><svg width="26" height="24" viewBox="0 0 26 24"><circle cx="14" cy="4" r="4" fill="#7b83eb"/><circle cx="22" cy="5" r="2.700" fill="#5059c9"/><path d="M18 9h8v7c0 4-5 6-8 3z" fill="#5059c9"/><path d="M8 9h12v9c0 5-12 6-12 0z" fill="#7b83eb"/><rect y="5" width="13" height="13" rx="1" fill="#4b53bc"/><text x="6.500" y="15.500" font-size="11" font-weight="bold" fill="#fff" text-anchor="middle">T</text><circle cx="20.500" cy="18.500" r="5" fill="#8bbf26" stroke="#fff"/><path d="M18 18.500l2 2 3.500-4" stroke="#fff" fill="none" stroke-width="1.300"/></svg><i></i></button>
            <button type="button" aria-label="Excel" class="bg-[#4b5459]"><svg width="22" height="22" viewBox="0 0 22 22"><path d="M12 3h9.500v16H12z" fill="#fff" stroke="#207245"/><path d="M13 6.500h8M13 9.500h8M13 12.500h8M13 15.500h8M17.500 3v16" stroke="#207245"/><path d="M0 2l13-2v22L0 20z" fill="#207245"/><text x="6.500" y="15" font-size="11" font-weight="bold" fill="#fff" text-anchor="middle">X</text></svg><i class="w-full!"></i></button>
            <button type="button" aria-label="Internet Explorer"><svg width="24" height="24" viewBox="0 0 24 24" fill="none"><path d="M6 13h14.500c.5-10-14-10-15 0-.5 9 11 11 14.500 4" stroke="#5ccbf3" stroke-width="4"/><path d="M21 8c3-11-8-7-14 0C-1 18 0 26 7 21" stroke="#f3c22b" stroke-width="2"/></svg><i></i></button>
        </div>
        <div class="ml-auto flex items-center text-[11px] leading-[18px]">
            <button type="button" aria-label="People" class="mr-[21px]"><svg width="15" height="16" viewBox="0 0 15 16" fill="none" stroke="#fff" stroke-width="1.200"><circle cx="10.500" cy="3.500" r="2.800"/><circle cx="5" cy="8" r="2.500"/><path d="M.6 15c0-6 8.500-6 8.500 0M8.500 8c3-2.500 6-.500 6 3"/></svg></button>
            <button type="button" aria-label="Show hidden icons" class="mr-2.5"><svg width="12" height="8"><path d="M1 7l5-5 5 5" fill="none" stroke="#fff" stroke-width="1.300"/></svg></button>
            <button type="button" aria-label="OneDrive" class="mr-2"><svg width="17" height="11" viewBox="0 0 17 11"><path d="M4 11a4 4 0 0 1 0-7 5 5 0 0 1 9 0 3.500 3.500 0 0 1 1 7z" fill="#1490df"/><path d="M4 4a5 5 0 0 1 9 0L8 7z" fill="#0364b8"/></svg></button>
            <button type="button" aria-label="Battery" class="mr-2"><svg width="16" height="10"><path d="M.5.500h13v9H.500z" fill="none" stroke="#fff"/><path d="M2 2h5v6H2zM14 3h2v4h-2z" fill="#fff"/></svg></button>
            <button type="button" aria-label="Network" class="mr-2"><svg width="16" height="14" viewBox="0 0 16 14" fill="none" stroke="#fff"><path d="M5 2.500h10.500v7H4.500V7M9.500 9.500V13M6 13.500h7M.500.500h4v4h-4zM2.500 4.500V12H4"/></svg></button>
            <button type="button" aria-label="Volume" class="mr-2.5"><svg width="17" height="14" viewBox="0 0 17 14" fill="none" stroke="#fff"><path d="M.5 4.500h2L6 1v12L2.500 9.500h-2zM8.500 5q1.500 2 0 4M11 3q3 4 0 8M13.500 1q4.500 6 0 12"/></svg></button>
            <span class="w-6 text-center">ENG<br>US</span>
            <span class="w-[76px] text-center">4:14 PM<br>9/8/2019</span>
            <button type="button" aria-label="25 notifications" class="mr-2 ml-1.5"><svg width="28" height="26" viewBox="0 0 28 26"><path d="M0 3h16v12H6l-3 3v-3H0z" fill="#fff"/><path d="M3 6.500h10M3 9.500h10M3 12.500h5" stroke="#1a262e"/><rect x="6" y="10" width="20" height="15" rx="7.500" fill="#3b444a" stroke="#8b9195"/><text x="16" y="22" font-size="11" font-weight="bold" fill="#fff" text-anchor="middle">25</text></svg></button>
            <span class="h-full w-[5px] border-l border-[#5a636a]"></span>
        </div>
    </nav>
</body>
</html>
